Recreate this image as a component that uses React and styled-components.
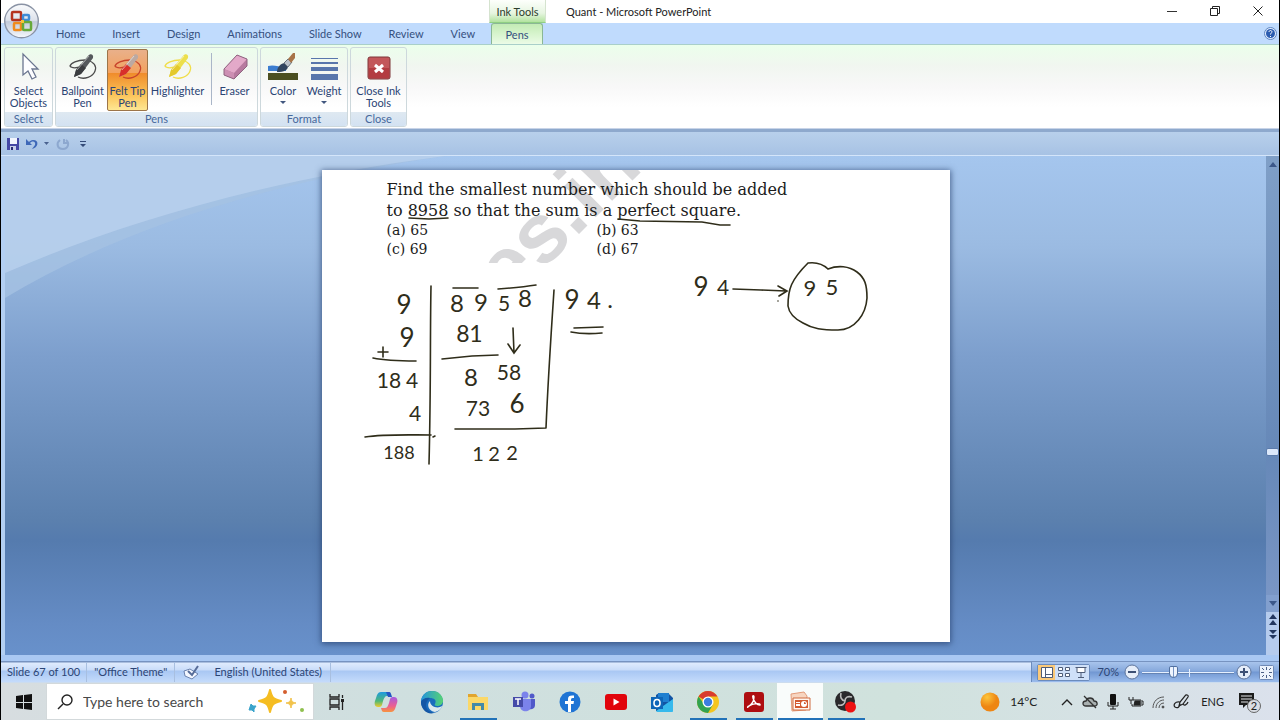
import { useState } from "react";
import styled, { createGlobalStyle } from "styled-components";

const GlobalStyle = createGlobalStyle`
  * {
    box-sizing: border-box;
  }

  body {
    margin: 0;
  }

  button,
  input {
    font-family: inherit;
    color: inherit;
  }

  button {
    padding: 0;
    border: none;
    background: none;
  }

  svg {
    display: block;
    flex: none;
  }
`;

const Page = styled.div`
  display: grid;
  grid-template-rows: auto auto auto minmax(0, 1fr) auto auto;
  height: 100vh;
  min-height: 560px;
  border: solid #000;
  border-width: 0 1px;
  background: #fff;
  font-family: Lato, "Open Sans", sans-serif;
  font-size: 11px;
  overflow: hidden;
`;

/* title and tabs */

const Header = styled.header`
  position: relative;
`;

const TitleBar = styled.div`
  display: flex;
  height: 23px;
  padding-left: 488px;
`;

const ToolsLabel = styled.div`
  width: 57px;
  padding-top: 4px;
  border: solid #d5e3cf;
  border-width: 0 1px;
  border-bottom: 1px solid #8fcf83;
  background: linear-gradient(#fdfffc, #e6f5e0 60%, #b2e39f);
  color: #2c3c2c;
  line-height: 15px;
  text-align: center;
`;

const Title = styled.h1`
  flex: 1;
  margin: 0;
  padding-left: 20px;
  font-size: 11px;
  font-weight: 400;
  line-height: 24px;
  color: #222;
`;

const WindowButton = styled.button`
  display: flex;
  align-items: center;
  justify-content: center;
  width: 43px;
  height: 22px;
`;

const Orb = styled.button`
  position: absolute;
  top: 3px;
  left: 2px;
`;

const TabBar = styled.nav`
  display: flex;
  align-items: flex-end;
  gap: 1px;
  height: 22px;
  padding-left: 42px;
  background: #c0dbfd;
  border-bottom: 1px solid #a9cfc9;
`;

const Tab = styled.button`
  height: 21px;
  padding: 0 13px;
  color: #35507f;
  font-size: 11px;
  white-space: nowrap;

  &:last-of-type {
    margin-right: auto;
  }
`;

const PensTab = styled(Tab)`
  width: 52px;
  margin-left: 2px;
  border: 1px solid #8ab795;
  border-bottom: none;
  border-radius: 3px 3px 0 0;
  background: linear-gradient(#c3ebb5, #d7f4cd 50%, #ebfbe6);
`;

const HelpLink = styled.a`
  display: flex;
  align-self: center;
  margin-right: 2px;
`;

/* ribbon */

const Ribbon = styled.div`
  display: flex;
  gap: 2px;
  height: 84px;
  padding: 2px 3px 0;
  background: linear-gradient(#ebffeb, #f1f6f0 25%, #f8f8f8 50%, #fff 75%);
  border-bottom: 1px solid #c8d4e8;
`;

const GroupBox = styled.section`
  display: flex;
  flex-direction: column;
  height: 80px;
  border: 1px solid #cdd8dc;
  border-radius: 3px;
  overflow: hidden;
`;

const GroupBody = styled.div`
  display: flex;
  flex: 1;
  justify-content: center;
  padding: 1px 2px;
`;

const GroupName = styled.div`
  background: linear-gradient(#dfe9f1, #d3e2f2);
  color: #46689c;
  line-height: 14px;
  text-align: center;
`;

const ToolButton = styled.button`
  display: flex;
  flex-direction: column;
  align-items: center;
  width: ${(props) => props.$width || 44}px;
  height: 62px;
  border: 1px solid ${(props) => (props.$active ? "#9c7549" : "transparent")};
  border-radius: 2px;
  background: ${(props) =>
    props.$active &&
    "linear-gradient(#e9b08a, #f3a25f 38%, #f08c2b 39%, #fbc45a 75%, #fee793)"};
  color: #2b4474;
  font-size: 11px;
  line-height: 12px;
  white-space: nowrap;

  svg {
    margin: 2px 0 3px;
  }
`;

const Divider = styled.div`
  width: 1px;
  height: 52px;
  margin: 4px 2px 0 4px;
  background: #aab6c8;
`;

const Caret = styled.span`
  margin-top: 4px;
  border: 3px solid transparent;
  border-top-color: #41577f;
  border-bottom: none;
`;

const QuickBar = styled.div`
  display: flex;
  align-items: center;
  gap: 4px;
  height: 27px;
  padding: 0 5px;
  border-top: 3px solid #8ea9cd;
  border-bottom: 1px solid #d4e5fa;
  background: linear-gradient(#b8d0eb, #a7c2e4);

  button {
    display: flex;
    align-items: center;
    justify-content: center;
    height: 18px;
  }
`;

/* workspace */

const Workspace = styled.main`
  display: flex;
  min-height: 0;
  padding-left: 4px;
  background: #b3cff2;
`;

const Canvas = styled.div`
  position: relative;
  display: flex;
  flex: 1;
  justify-content: center;
  min-width: 0;
  padding: 14px 0 13px;
  background: linear-gradient(
    #a5c6ee,
    #9bbbe2 18%,
    #7d9fcd 40%,
    #5b80ae 73%,
    #557bae 77%,
    #658cc5 94%,
    #6891cb
  );
`;

const Swoosh = styled.svg`
  position: absolute;
  top: 0;
  left: 0;
`;

const Slide = styled.article`
  position: relative;
  height: 100%;
  aspect-ratio: 628 / 472;
  padding: 9px 65px;
  background: #fff;
  box-shadow: 0 1px 6px 1px rgba(37, 61, 105, 0.7);
  font-family: "DejaVu Serif", serif;
  color: #1c1c1c;
`;

const Layer = styled.svg`
  position: absolute;
  inset: 0;
  width: 100%;
  height: 100%;
`;

const Question = styled.p`
  position: relative;
  margin: 0;
  font-size: 16px;
  line-height: 21px;
  white-space: nowrap;
`;

const Options = styled.ol`
  position: relative;
  display: grid;
  grid-template-columns: 210px 210px;
  margin: 0;
  padding: 0;
  list-style: none;
  font-size: 14px;
  line-height: 19px;
`;

const ScrollBar = styled.div`
  display: flex;
  flex-direction: column;
  align-items: center;
  justify-content: space-between;
  width: 13px;
  background: linear-gradient(#7f9fc7, #6688b8 60%, #829ccb);
`;

const ScrollPart = styled.button`
  display: flex;
  flex-direction: column;
  align-items: center;
  justify-content: space-evenly;
  width: 13px;
  height: ${(props) => props.$height}px;
  background: ${(props) => props.$fill};
`;

const ScrollThumb = styled.div`
  width: 13px;
  height: 8px;
  margin-top: 136px;
  border: 1px solid #5b7bab;
  border-radius: 2px;
  background: #dce8fa;
`;

const Nudge = styled.div`
  display: flex;
  flex-direction: column;
  width: 13px;
  background: #b5cbed;
`;

/* status bar */

const StatusBar = styled.footer`
  display: flex;
  height: 27px;
  padding-top: 1px;
  border-top: 6px solid #a9c8f3;
  background: linear-gradient(#7793c0 1px, #dfebfd 2px, #c9dcf9 9px, #a9c7f3 10px, #c4dbfb);
  color: #2c4575;
  line-height: 18px;
`;

const StatusItem = styled.div`
  display: flex;
  align-items: center;
  justify-content: center;
  gap: 14px;
  padding: 0 6px;
  min-width: ${(props) => props.$width}px;
  border-right: 1px solid #a8bfe0;
  white-space: nowrap;
`;

const ViewTools = styled.div`
  display: flex;
  align-items: center;
  margin-left: auto;
  padding: 0 5px;
  border-left: 1px solid #6c8cbd;
  background: linear-gradient(#a8c4ec, #87a9dc 45%, #7197d2 50%, #9bbcec);
`;

const ViewSwitch = styled.div`
  display: flex;
  margin-right: 7px;
  border: 1px solid #6b8bbd;
  border-radius: 2px;
`;

const ViewButton = styled.button`
  display: flex;
  align-items: center;
  justify-content: center;
  width: 17px;
  height: 15px;
  background: ${(props) => (props.$active ? "#fbc978" : "#cfe0f8")};
`;

const RoundButton = styled.button`
  display: flex;
  margin-left: ${(props) => props.$gap || 0}px;
`;

const Zoom = styled.input`
  appearance: none;
  width: 92px;
  height: 15px;
  margin: 0 2px;
  background:
    linear-gradient(#e6f0ff, #e6f0ff) 47px 4px / 1px 8px no-repeat,
    linear-gradient(#e6f0ff, #e6f0ff) 0 7px / 100% 1px no-repeat,
    linear-gradient(#6584b4, #6584b4) 0 8px / 100% 1px no-repeat;

  &::-webkit-slider-thumb {
    appearance: none;
    width: 9px;
    height: 12px;
    border: 1px solid #51709f;
    border-radius: 2px 2px 5px 5px;
    background: linear-gradient(90deg, #eef4fe 3px, #7795c4 3px, #7795c4 4px, #eef4fe 4px);
  }
`;

/* taskbar */

const TaskBar = styled.div`
  display: flex;
  height: 38px;
  background: linear-gradient(90deg, #d7dde0, #cfdfdf 30%, #d0e2dd 70%, #dbe1ec);
  border-top: 1px solid #ccdcee;
`;

const TaskButton = styled.button`
  display: flex;
  flex-direction: column;
  align-items: center;
  justify-content: center;
  width: 46px;
  height: 37px;
  padding-top: 2px;
  background: ${(props) => props.$active && "#f9fcfb"};

  &::after {
    content: "";
    width: ${(props) => (props.$active ? 45 : 37)}px;
    height: 2px;
    margin-top: auto;
    background: ${(props) => (props.$open ? "#2272b8" : "transparent")};
  }

  svg {
    margin-top: auto;
  }
`;

const StartButton = styled(TaskButton)`
  width: 45px;
`;

const SearchBox = styled.label`
  display: flex;
  align-items: center;
  width: 268px;
  padding: 0 6px 0 10px;
  border: 1px solid #d3d9db;
  background: #fff;
  color: #414141;
`;

const SearchInput = styled.input`
  flex: 1;
  min-width: 0;
  padding: 0 0 0 10px;
  border: none;
  outline: none;
  background: none;
  font-size: 14px;

  &::placeholder {
    color: #484848;
    opacity: 1;
  }
`;

const CopilotButton = styled(TaskButton)`
  margin-left: 3px;
`;

const Tray = styled.div`
  display: flex;
  align-items: center;
  margin-left: auto;
  padding-right: 18px;
  color: #222;
`;

const Weather = styled.button`
  display: flex;
  align-items: center;
  gap: 10px;
  margin-right: 18px;
  font-size: 12px;
`;

const TrayButton = styled.button`
  display: flex;
  align-items: center;
  justify-content: center;
  width: 23px;
  height: 30px;
`;

const Language = styled.button`
  margin: 0 14px 0 8px;
  font-size: 11px;
`;

const tabs = ["Home", "Insert", "Design", "Animations", "Slide Show", "Review", "View"];

const options = ["(a) 65", "(b) 63", "(c) 69", "(d) 67"];

// written figures: text, x, baseline, size
const figures = [
  ["9", 82, 144, 26],
  ["9", 85, 177, 26],
  ["18", 67, 218, 21],
  ["4", 90, 218, 21],
  ["4", 93, 251, 21],
  ["188", 77, 289, 18],
  ["8", 135, 142, 24],
  ["9", 159, 141, 24],
  ["5", 182, 141, 21],
  ["8", 203, 137, 24],
  ["8", 141, 172, 23],
  ["1", 154, 172, 23],
  ["8", 149, 216, 24],
  ["58", 187, 210, 21],
  ["73", 156, 246, 21],
  ["6", 195, 243, 26],
  ["1", 156, 291, 20],
  ["2", 172, 291, 20],
  ["2", 190, 290, 20],
  ["9", 250, 139, 26],
  ["4", 272, 139, 24],
  [".", 288, 138, 24],
  ["9", 379, 126, 26],
  ["4", 401, 125, 21],
  ["9", 488, 126, 22],
  ["5", 510, 125, 22],
];

function PenIcon({ tip, body, ring }) {
  return (
    <svg width="30" height="30" viewBox="0 0 30 30">
      <path
        d="M17 8C9 8 3 11 2 14c1 2 6 2 11 1M19 8c7 2 10 6 8 11-2 6-11 9-17 6"
        fill="none"
        stroke={ring}
        strokeWidth="1.300"
      />
      <path d="M6 25l2-7L20 4c2-3 6-2 5 2L13 22z" fill={body} />
      <path d="M6 25l2-7 5-6 5 4-5 6z" fill={tip} />
      <path d="M9 18L21 4" stroke="#fff" strokeOpacity="0.5" />
    </svg>
  );
}

function Chevron({ up, color = "#3c588a" }) {
  return (
    <svg width="8" height="5" viewBox="0 0 8 5">
      <path d={up ? "M0 5L4 0l4 5z" : "M0 0h8L4 5z"} fill={color} />
    </svg>
  );
}

function OfficeOrb() {
  return (
    <svg width="37" height="36" viewBox="0 0 37 36">
      <defs>
        <linearGradient id="orb" x2="0" y2="1">
          <stop offset="0" stopColor="#fafbfd" />
          <stop offset="0.48" stopColor="#dde2eb" />
          <stop offset="0.52" stopColor="#c2cada" />
          <stop offset="1" stopColor="#f5f8fc" />
        </linearGradient>
      </defs>
      <circle cx="18.500" cy="18" r="16.800" fill="url(#orb)" stroke="#8a93a5" strokeWidth="1.400" />
      <g fill="none" strokeWidth="2.500">
        <rect x="9" y="9" width="9" height="8" rx="1" stroke="#b5321f" />
        <rect x="20" y="12" width="6" height="5" rx="1" stroke="#3f8bd6" />
        <rect x="11" y="20" width="7" height="7" rx="1" stroke="#f08b1d" />
        <rect x="20" y="19" width="8" height="8" rx="1" stroke="#67a93a" />
      </g>
      <path d="M18 17h3v3h-3z" fill="#f6c236" />
    </svg>
  );
}

function Group({ name, children }) {
  return (
    <GroupBox>
      <GroupBody>{children}</GroupBody>
      <GroupName>{name}</GroupName>
    </GroupBox>
  );
}

function RibbonTools() {
  const [pen, setPen] = useState("felt");

  return (
    <Ribbon>
      <Group name="Select">
        <ToolButton $width={43}>
          <svg width="30" height="30" viewBox="0 0 30 30">
            <path
              d="M9 2v21l5-4 4 8 4-2-4-8h6z"
              fill="#fdfdff"
              stroke="#6b7690"
              strokeWidth="1.300"
            />
          </svg>
          Select
          <br />
          Objects
        </ToolButton>
      </Group>
      <Group name="Pens">
        <ToolButton $width={49} $active={pen === "ball"} onClick={() => setPen("ball")}>
          <PenIcon tip="#3b3d40" body="#55595c" ring="#4d4d4d" />
          Ballpoint
          <br />
          Pen
        </ToolButton>
        <ToolButton $width={41} $active={pen === "felt"} onClick={() => setPen("felt")}>
          <PenIcon tip="#d8302a" body="#bba9a2" ring="#c8442c" />
          Felt Tip
          <br />
          Pen
        </ToolButton>
        <ToolButton $width={59} $active={pen === "high"} onClick={() => setPen("high")}>
          <PenIcon tip="#e4c92c" body="#ecdf4c" ring="#f0de4a" />
          Highlighter
        </ToolButton>
        <Divider />
        <ToolButton $width={41}>
          <svg width="30" height="30" viewBox="0 0 30 30">
            <path d="M4 17L17 3l10 4v7L14 27 4 23z" fill="#b77a9f" />
            <path d="M4 17L17 3l10 4-13 14z" fill="#e3a9c9" />
            <path d="M14 21v6L4 23v-6z" fill="#cd8fb3" />
            <path d="M4 17L17 3l10 4v7L14 27 4 23z" fill="none" stroke="#8f6480" />
          </svg>
          Eraser
        </ToolButton>
      </Group>
      <Group name="Format">
        <ToolButton $width={40}>
          <svg width="30" height="30" viewBox="0 0 30 30">
            <path d="M0 14c7-2 12 2 18 1v4H0z" fill="#3c7dd0" />
            <path d="M9 20c0-5 4-9 8-9l3 3c0 4-4 6-11 6z" fill="#31455f" />
            <path d="M16 11l4-4 4 3-4 5z" fill="#b9c0c8" stroke="#68727c" />
            <path d="M20 7l5-6h2v5l-4 5z" fill="#a77448" />
            <path d="M0 21h30v7H0z" fill="#4b4f21" />
          </svg>
          Color
          <Caret />
        </ToolButton>
        <ToolButton $width={42}>
          <svg width="30" height="30" viewBox="0 0 30 30">
            <path d="M2 6h27v1H2zM2 10h27v2H2zM2 15h27v4H2zM2 22h27v6H2z" fill="#5876ac" />
          </svg>
          Weight
          <Caret />
        </ToolButton>
      </Group>
      <Group name="Close">
        <ToolButton $width={51}>
          <svg width="30" height="30" viewBox="0 0 30 30">
            <rect x="4" y="5" width="22" height="22" rx="2" fill="#c3575a" stroke="#7f3738" />
            <path d="M5 16h20v10H5z" fill="#b33c41" />
            <path d="M11 13l8 7m0-7l-8 7" stroke="#fff" strokeWidth="3" />
          </svg>
          Close Ink
          <br />
          Tools
        </ToolButton>
      </Group>
    </Ribbon>
  );
}

function QuickAccess() {
  return (
    <QuickBar>
      <button aria-label="Save">
        <svg width="14" height="14" viewBox="0 0 14 14">
          <path d="M1 1h12v12H1z" fill="#4548a5" />
          <path d="M4 1h7v6H4z" fill="#f2f5fd" />
          <path d="M4 9h6v4H4z" fill="#c9d0ea" />
          <path d="M5 10h2v3H5z" fill="#272b72" />
        </svg>
      </button>
      <button aria-label="Undo">
        <svg width="16" height="14" viewBox="0 0 16 14">
          <path d="M2 2v6h6L6 6c3-3 6-1 5 2l-3 4c6-1 8-9 1-9-2 0-3 1-4 2z" fill="#3e68b8" />
        </svg>
      </button>
      <button aria-label="Undo list">
        <svg width="5" height="3" viewBox="0 0 5 3">
          <path d="M0 0h5L2.500 3z" fill="#4a628f" />
        </svg>
      </button>
      <button aria-label="Repeat">
        <svg width="20" height="14" viewBox="0 0 20 14">
          <path d="M7 3c-4 3-3 9 3 9 5 0 7-6 3-9M11 2v4h4" fill="none" stroke="#8da8cf" strokeWidth="2" />
        </svg>
      </button>
      <button aria-label="Customize">
        <svg width="12" height="8" viewBox="0 0 12 8">
          <path d="M3 1h6v1H3zM3 4h6L6 7z" fill="#344b78" />
        </svg>
      </button>
    </QuickBar>
  );
}

function InkLayer() {
  return (
    <Layer viewBox="0 0 628 472" fill="none" stroke="#2f2d1a" strokeWidth="1.600" strokeLinecap="round">
      <path d="M87 48l20 1 19-1M296 49l22 2 62 1 18 3h10" />
      <path d="M109 116c-1 50 0 100-2 178M232 120c-3 45-6 90-8 138M133 259l60 0 31-1" />
      <path d="M131 118h25M176 119c13-1 25-2 38-4M51 188c14 3 28 3 43 3M56 182h10M61 177v10" />
      <path d="M43 267c20-3 42-2 66-2M120 189l30-3 26-1M191 158l1 25M186 174l6 9 6-8" />
      <path d="M252 158l29-1M249 162c10 2 20 2 31 1M111 267l2-1M456 131h0" />
      <path d="M411 119l28 1 25 1M456 116l9 5-8 5" />
      <path d="M486 93c8-1 14 0 20 6 10-4 21-3 29 3 8 6 10 13 10 26-1 16-12 32-29 32-16 0-25-1-35-7-8-4-14-10-15-17 0-17 3-26 20-43" />
      <g fill="#2f2d1a" stroke="none" fontFamily="Lato, sans-serif" textAnchor="middle">
        {figures.map(([text, x, y, size]) => (
          <text key={`${x}-${y}`} x={x} y={y} fontSize={size}>
            {text}
          </text>
        ))}
      </g>
    </Layer>
  );
}

function SlideView() {
  return (
    <Workspace>
      <Canvas>
        <Swoosh width="640" height="150" viewBox="0 0 640 150">
          <path d="M0 0h440C270 25 120 70 0 142z" fill="#a5c2e2" opacity="0.800" />
          <path d="M0 0h440C270 22 120 65 0 117z" fill="#b9d1ee" opacity="0.800" />
        </Swoosh>
        <Slide>
          <Layer viewBox="0 0 628 472" aria-hidden="true">
            <clipPath id="paper">
              <rect x="60" y="0" width="400" height="93" />
            </clipPath>
            <g clipPath="url(#paper)">
              <text
                x="187"
                y="134"
                transform="rotate(-45 187 134)"
                fontFamily="Liberation Sans, sans-serif"
                fontSize="84"
                fontWeight="700"
                fill="#d8d8da"
              >
                es.in
              </text>
            </g>
          </Layer>
          <Question>
            Find the smallest number which should be added
            <br />
            to 8958 so that the sum is a perfect square.
          </Question>
          <Options>
            {options.map((option) => (
              <li key={option}>{option}</li>
            ))}
          </Options>
          <InkLayer />
        </Slide>
      </Canvas>
      <ScrollBar>
        <ScrollPart $height={16} aria-label="Scroll up">
          <Chevron up />
        </ScrollPart>
        <ScrollThumb />
        <Nudge>
          <ScrollPart $height={17} $fill="#829fce" aria-label="Scroll down">
            <Chevron />
          </ScrollPart>
          <ScrollPart $height={15} aria-label="Previous slide">
            <Chevron up color="#22365f" />
            <Chevron up color="#22365f" />
          </ScrollPart>
          <ScrollPart $height={28} aria-label="Next slide">
            <svg width="8" height="24" viewBox="0 0 8 24">
              <path d="M0 1h8L4 5zM0 6h8l-4 4z" fill="#22365f" />
            </svg>
          </ScrollPart>
        </Nudge>
      </ScrollBar>
    </Workspace>
  );
}

function Status() {
  const [zoom, setZoom] = useState(33);

  return (
    <StatusBar>
      <StatusItem $width={86}>Slide 67 of 100</StatusItem>
      <StatusItem $width={88}>"Office Theme"</StatusItem>
      <StatusItem $width={156}>
        <svg width="17" height="15" viewBox="0 0 17 15">
          <path d="M1 6l6-2 8 5-6 5-7-3z" fill="#f3f7ff" stroke="#6b82ae" />
          <path d="M5 6l4 4 6-9" fill="none" stroke="#576c98" strokeWidth="2" />
        </svg>
        English (United States)
      </StatusItem>
      <ViewTools>
        <ViewSwitch>
          <ViewButton $active aria-label="Normal">
            <svg width="12" height="11" viewBox="0 0 12 11" fill="#fff" stroke="#4f5d78">
              <path d="M.5.5h11v10H.5zM4.500.5v10M4.500 7.500h7" />
            </svg>
          </ViewButton>
          <ViewButton aria-label="Slide sorter">
            <svg width="12" height="11" viewBox="0 0 12 11" fill="#fff" stroke="#4f5d78">
              <path d="M.5.5h4v3h-4zM7.500.5h4v3h-4zM.5 6.500h4v3h-4zM7.500 6.500h4v3h-4z" />
            </svg>
          </ViewButton>
          <ViewButton aria-label="Slide show">
            <svg width="12" height="11" viewBox="0 0 12 11" fill="#fff" stroke="#4f5d78">
              <path d="M.5.5h11M2 .5v5h8v-5M6 6v4M3 10.500h6" />
            </svg>
          </ViewButton>
        </ViewSwitch>
        70%
        <RoundButton $gap={5} aria-label="Zoom out">
          <svg width="16" height="16" viewBox="0 0 16 16">
            <circle cx="8" cy="8" r="7" fill="#e5edf9" stroke="#5d749c" />
            <path d="M4 8h8" stroke="#3d5075" strokeWidth="2" />
          </svg>
        </RoundButton>
        <Zoom
          type="range"
          aria-label="Zoom"
          value={zoom}
          onChange={(e) => setZoom(e.target.value)}
        />
        <RoundButton aria-label="Zoom in">
          <svg width="16" height="16" viewBox="0 0 16 16">
            <circle cx="8" cy="8" r="7" fill="#e5edf9" stroke="#5d749c" />
            <path d="M4 8h8M8 4v8" stroke="#3d5075" strokeWidth="2" />
          </svg>
        </RoundButton>
        <RoundButton $gap={7} aria-label="Fit to window">
          <svg width="15" height="15" viewBox="0 0 15 15">
            <rect x=".5" y=".5" width="14" height="14" rx="1" fill="#edf3fc" stroke="#7089b4" />
            <path
              d="M7.500 2v3M7.500 10v3M2 7.500h3M10 7.500h3M3 3l2 2M12 3l-2 2M3 12l2-2M12 12l-2-2"
              stroke="#4b5f86"
            />
          </svg>
        </RoundButton>
      </ViewTools>
    </StatusBar>
  );
}

function TaskIcons() {
  return (
    <>
      <TaskButton aria-label="Task view">
        <svg width="18" height="18" viewBox="0 0 18 18" fill="none" stroke="#222" strokeWidth="1.300">
          <path d="M2 1v3h9V1M2 6h9v6H2zM2 17v-3h9v3M14.500 2v3M14.500 9v8" />
          <path d="M13 6h3v3h-3z" fill="#222" stroke="none" />
        </svg>
      </TaskButton>
      <CopilotButton aria-label="Copilot">
        <svg width="24" height="22" viewBox="0 0 24 22">
          <defs>
            <linearGradient id="cop1" x2="0" y2="1">
              <stop offset="0" stopColor="#1d9ae0" />
              <stop offset="0.6" stopColor="#4fb878" />
              <stop offset="1" stopColor="#f0ca2c" />
            </linearGradient>
            <linearGradient id="cop2" x2="0" y2="1">
              <stop offset="0" stopColor="#a55be0" />
              <stop offset="0.6" stopColor="#ec5f91" />
              <stop offset="1" stopColor="#f7943e" />
            </linearGradient>
          </defs>
          <path d="M7 1h7c2 0 2 1 3 4h-4c-2 0-3 2-4 5l-1 4c-1 2-2 2-4 2-3 0-4-3-3-6l2-6c1-2 2-3 4-3z" fill="url(#cop1)" />
          <path d="M12 1h3c2 0 2 2 3 5h-4z" fill="#2456c4" />
          <path d="M17 21h-7c-2 0-2-1-3-4h4c2 0 3-2 4-5l1-4c1-2 2-2 4-2 3 0 4 3 3 6l-2 6c-1 2-2 3-4 3z" fill="url(#cop2)" />
        </svg>
      </CopilotButton>
      <TaskButton aria-label="Edge">
        <svg width="24" height="24" viewBox="0 0 24 24">
          <defs>
            <linearGradient id="edge1">
              <stop offset="0" stopColor="#2593dc" />
              <stop offset="1" stopColor="#55d374" />
            </linearGradient>
          </defs>
          <circle cx="12" cy="12" r="11" fill="#1a6cbd" />
          <path d="M1 11C2 4 7 1 12 1c7 0 11 5 11 10 0 3-3 5-6 5-2 0-3-1-2-2 2-4-1-6-5-6-5 0-8 2-9 3z" fill="url(#edge1)" />
          <path d="M10 11c-4 4-1 10 5 11 4-1 7-4 7-6-4 3-12 1-12-5z" fill="#dce8ed" />
          <path d="M8 10c-4 5-2 11 6 13-7 2-13-4-13-11 1-3 5-5 9-4z" fill="#1557a5" />
        </svg>
      </TaskButton>
      <TaskButton $open aria-label="File explorer">
        <svg width="22" height="20" viewBox="0 0 22 20">
          <path d="M1 2h8l2 3h10v3H1z" fill="#e1a52e" />
          <path d="M1 5h20v13H1z" fill="#fbd868" />
          <path d="M5 18v-7h12v7h-3v-4H8v4z" fill="#438aa8" />
        </svg>
      </TaskButton>
      <TaskButton aria-label="Teams">
        <svg width="24" height="22" viewBox="0 0 24 22">
          <circle cx="13" cy="4" r="3.500" fill="#7b83eb" />
          <circle cx="20" cy="5" r="2.500" fill="#5059c9" />
          <path d="M16 8h7v6c0 4-4 5-7 4z" fill="#5059c9" />
          <path d="M8 8h11v7c0 7-11 7-11 0z" fill="#7b83eb" />
          <path d="M1 6h10v10H1z" fill="#454ba8" />
          <path d="M3 8h6M6 8v6" stroke="#fff" strokeWidth="1.500" />
        </svg>
      </TaskButton>
      <TaskButton aria-label="Facebook">
        <svg width="22" height="22" viewBox="0 0 22 22">
          <circle cx="11" cy="11" r="10.500" fill="#1f74d4" />
          <path d="M9 21v-8H6v-3h3V8c0-3 2-4 6-3.500V7c-2 0-3 0-3 2v1h3l-.5 3H12v8z" fill="#fff" />
        </svg>
      </TaskButton>
      <TaskButton aria-label="YouTube">
        <svg width="24" height="18" viewBox="0 0 24 18">
          <rect x="1" y="1" width="22" height="16" rx="3" fill="#e1040c" />
          <path d="M9.500 5.500v7l6-3.500z" fill="#fff" />
        </svg>
      </TaskButton>
      <TaskButton aria-label="Outlook">
        <svg width="24" height="22" viewBox="0 0 24 22">
          <path d="M6 4l3-2h9l5 5v13H6z" fill="#1254a4" />
          <path d="M8 2h11v9H8z" fill="#1f7fd0" />
          <path d="M6 20L23 8v12c0 1-1 1-1 1H7z" fill="#36b9ec" />
          <path d="M1 6h12v12H1z" fill="#0e66b8" />
          <ellipse cx="7" cy="12" rx="3" ry="3.500" fill="none" stroke="#fff" strokeWidth="1.600" />
        </svg>
      </TaskButton>
      <TaskButton $open aria-label="Chrome">
        <svg width="24" height="24" viewBox="0 0 24 24">
          <circle cx="12" cy="12" r="11" fill="#f5c51f" />
          <path d="M12 12L2.500 6.500A11 11 0 0 1 21.500 6.500H12z" fill="#d93b30" />
          <path d="M2.500 6.500A11 11 0 0 0 12 23l5-8.500-5 1-5-3z" fill="#31a352" />
          <circle cx="12" cy="12" r="5.500" fill="#fff" />
          <circle cx="12" cy="12" r="4.200" fill="#3c7de0" />
        </svg>
      </TaskButton>
      <TaskButton $open aria-label="Acrobat">
        <svg width="22" height="22" viewBox="0 0 22 22">
          <rect x="1" y="1" width="20" height="20" rx="3" fill="#ae0d10" />
          <path
            d="M5 16c3-2 6-6 6-10 0-2-2-2-1 1 1 4 4 7 7 7 1-2-7-2-11 1-1 0-2 2-1 1z"
            fill="none"
            stroke="#fff"
            strokeWidth="1.400"
          />
        </svg>
      </TaskButton>
      <TaskButton $active $open aria-label="PowerPoint">
        <svg width="24" height="22" viewBox="0 0 24 22">
          <path d="M3 3l13-2 3 4-1 14-14 1z" fill="#f7d5c0" stroke="#e39b79" />
          <path d="M5 7h17v12H5z" fill="#fff6ef" stroke="#cf6c42" />
          <path d="M7 9h13v8H7z" fill="#d35b31" />
          <path d="M8 11h4v1H8zM8 13h4v2H8z" fill="#fff" />
          <circle cx="16" cy="13" r="3" fill="#fff" />
          <path d="M16 13v-2a2 2 0 0 1 2 2z" fill="#d35b31" />
        </svg>
      </TaskButton>
      <TaskButton $open aria-label="OBS Studio">
        <svg width="24" height="24" viewBox="0 0 24 24">
          <circle cx="11" cy="11" r="10" fill="#2a292c" />
          <path
            d="M7 3c-1 4 0 7 4 8M18 7c-4-1-7 0-7 4M4 15c4 1 7-1 7-4"
            fill="none"
            stroke="#bcbcbc"
            strokeWidth="1.600"
          />
          <circle cx="16.500" cy="17" r="5.500" fill="#ee1111" />
        </svg>
      </TaskButton>
    </>
  );
}

function SystemTray() {
  return (
    <Tray>
      <Weather>
        <svg width="20" height="20" viewBox="0 0 20 20">
          <defs>
            <radialGradient id="sun" cx="0.35" cy="0.25">
              <stop offset="0" stopColor="#fcc53c" />
              <stop offset="1" stopColor="#ee8613" />
            </radialGradient>
          </defs>
          <circle cx="10" cy="10" r="9.500" fill="url(#sun)" />
        </svg>
        14°C
      </Weather>
      <TrayButton aria-label="Hidden icons">
        <svg width="12" height="8" viewBox="0 0 12 8">
          <path d="M1 7l5-5 5 5" fill="none" stroke="#222" strokeWidth="1.400" />
        </svg>
      </TrayButton>
      <TrayButton aria-label="OneDrive">
        <svg width="16" height="14" viewBox="0 0 16 14" fill="none" stroke="#333" strokeWidth="1.300">
          <path d="M4 11c-4 0-4-5 0-5 1-4 7-4 8 0 4 0 4 5 1 5zM2 1l12 12" fill="#a9b0b0" />
        </svg>
      </TrayButton>
      <TrayButton aria-label="Microphone">
        <svg width="12" height="16" viewBox="0 0 12 16">
          <rect x="3" y="0" width="6" height="11" rx="1" fill="#111" />
          <path d="M1 8v4h10V8M6 12v3M3 15h6" fill="none" stroke="#222" />
        </svg>
      </TrayButton>
      <TrayButton aria-label="Battery">
        <svg width="16" height="12" viewBox="0 0 16 12" fill="none" stroke="#222">
          <path d="M5 4h8v6H4V8M14 5h1v4h-1" />
          <path d="M7 5h5v4H6z" fill="#222" />
          <path d="M1 1v3h4V1M3 4v4" />
        </svg>
      </TrayButton>
      <TrayButton aria-label="Network">
        <svg width="14" height="14" viewBox="0 0 14 14" fill="none" stroke="#555">
          <path d="M1 13C1 6 6 2 12 2M4 13c0-5 4-8 8-8M7 13c0-3 2-5 5-5" />
          <circle cx="11" cy="12" r="1" fill="#222" />
        </svg>
      </TrayButton>
      <TrayButton aria-label="Ink workspace">
        <svg width="18" height="16" viewBox="0 0 18 16" fill="none" stroke="#222" strokeWidth="1.200">
          <path d="M6 12l1-4 5-6c1-2 4-1 3 1l-5 7zM7 8C2 7 0 11 2 13c3 2 5-1 5-3M10 10c1 2 4 1 5-2" />
        </svg>
      </TrayButton>
      <Language>ENG</Language>
      <TrayButton aria-label="2 notifications">
        <svg width="24" height="24" viewBox="0 0 24 24">
          <path d="M1 3h15v12H8l-3 3v-3H1z" fill="#1b1b1b" />
          <path d="M3 6h11M3 9h11M3 12h7" stroke="#e5e7ea" />
          <circle cx="16" cy="16" r="6.500" fill="#d9dde4" stroke="#666" />
          <text x="16" y="20" fontSize="11" textAnchor="middle" fill="#222">
            2
          </text>
        </svg>
      </TrayButton>
    </Tray>
  );
}

function App() {
  const [search, setSearch] = useState("");

  return (
    <>
      <GlobalStyle />
      <Page>
        <Header>
          <TitleBar>
            <ToolsLabel>Ink Tools</ToolsLabel>
            <Title>Quant - Microsoft PowerPoint</Title>
            <WindowButton aria-label="Minimize">
              <svg width="10" height="10" viewBox="0 0 10 10">
                <path d="M0 5h10v1H0z" fill="#333" />
              </svg>
            </WindowButton>
            <WindowButton aria-label="Restore">
              <svg width="10" height="10" viewBox="0 0 10 10" fill="none" stroke="#222">
                <path d="M.5 2.500h7v7h-7zM2.500 2V.5h7v7H8" />
              </svg>
            </WindowButton>
            <WindowButton aria-label="Close">
              <svg width="10" height="10" viewBox="0 0 10 10">
                <path d="M.5.5l9 9M9.500.5l-9 9" stroke="#222" />
              </svg>
            </WindowButton>
          </TitleBar>
          <TabBar>
            {tabs.map((tab) => (
              <Tab key={tab}>{tab}</Tab>
            ))}
            <PensTab>Pens</PensTab>
            <HelpLink href="#help" aria-label="Help">
              <svg width="13" height="13" viewBox="0 0 13 13">
                <circle cx="6.500" cy="6.500" r="6" fill="#e2edfc" stroke="#5f86c2" />
                <circle cx="6.500" cy="6.500" r="4.500" fill="#2b5cb0" />
                <path d="M5 5c0-2 3-2 3 0 0 1-1.500 1-1.500 2.500M6.500 9v1" fill="none" stroke="#fff" />
              </svg>
            </HelpLink>
          </TabBar>
          <Orb aria-label="Office Button">
            <OfficeOrb />
          </Orb>
        </Header>
        <RibbonTools />
        <QuickAccess />
        <SlideView />
        <Status />
        <TaskBar>
          <StartButton aria-label="Start">
            <svg width="16" height="16" viewBox="0 0 16 16">
              <path d="M0 2l7-1v7H0zM8 1l8-1v8H8zM0 9h7v6l-7-1zM8 9h8v7l-8-1z" fill="#111" />
            </svg>
          </StartButton>
          <SearchBox>
            <svg width="16" height="16" viewBox="0 0 16 16" fill="none" stroke="#222" strokeWidth="1.400">
              <circle cx="10" cy="6" r="5" />
              <path d="M6 10l-5 5" />
            </svg>
            <SearchInput
              type="text"
              aria-label="Search"
              placeholder="Type here to search"
              value={search}
              onChange={(e) => setSearch(e.target.value)}
            />
            <svg width="60" height="26" viewBox="0 0 60 26">
              <path
                d="M23 1c2 8 3 9 11 11-8 2-9 3-11 11-2-8-3-9-11-11 8-2 9-3 11-11z"
                fill="#f5bd22"
                stroke="#f5bd22"
                strokeWidth="2"
                strokeLinejoin="round"
              />
              <path
                d="M44 9c1 4 1 4 5 5-4 1-4 1-5 5-1-4-1-4-5-5 4-1 4-1 5-5z"
                fill="#f2c34c"
                stroke="#f2c34c"
              />
              <path d="M4 15l2 2 3 0-2 3 0 3-2-2-3 0 1-3z" fill="#3ba4cb" stroke="#3ba4cb" />
              <circle cx="38" cy="3" r="2" fill="#d45e2e" />
              <circle cx="55" cy="21" r="2" fill="#8fc04e" />
            </svg>
          </SearchBox>
          <TaskIcons />
          <SystemTray />
        </TaskBar>
      </Page>
    </>
  );
}

export default App;
